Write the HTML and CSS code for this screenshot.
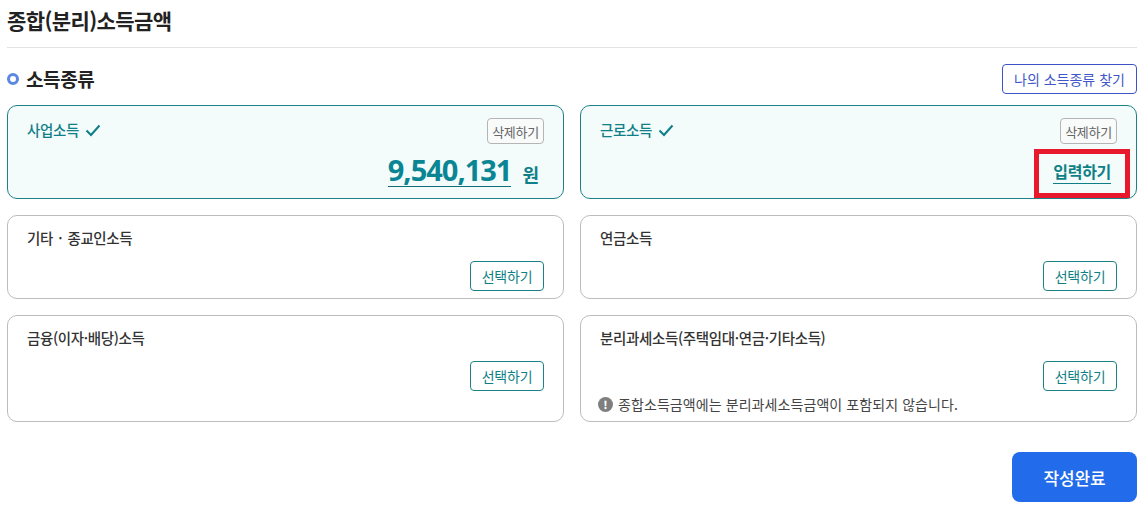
FILE: index.html
```html
<!DOCTYPE html>
<html lang="ko">
<head>
<meta charset="utf-8">
<title>종합(분리)소득금액</title>
<link rel="stylesheet" href="styles.css">
</head>
<body>
<main class="page">
  <h1 class="page-title">종합(분리)소득금액</h1>
  <div class="section-head">
    <h2 class="section-title"><span class="bullet"></span>소득종류</h2>
    <button class="find-btn">나의 소득종류 찾기</button>
  </div>
  <div class="grid">
    <section class="card card-active card-r1">
      <div class="card-top">
        <h3 class="card-title title-active">사업소득
          <svg class="check" viewBox="0 0 16 14" width="16" height="14"><path d="M1.5 7.5 L6 12 L14.5 2.5" fill="none" stroke="#0b7f86" stroke-width="2"/></svg>
        </h3>
        <button class="del-btn">삭제하기</button>
      </div>
      <div class="card-bottom amount-row">
        <a class="amount">9,540,131</a><span class="unit">원</span>
      </div>
    </section>
    <section class="card card-active card-r1">
      <div class="card-top">
        <h3 class="card-title title-active">근로소득
          <svg class="check" viewBox="0 0 16 14" width="16" height="14"><path d="M1.5 7.5 L6 12 L14.5 2.5" fill="none" stroke="#0b7f86" stroke-width="2"/></svg>
        </h3>
        <button class="del-btn">삭제하기</button>
      </div>
      <div class="card-bottom input-row">
        <a class="input-link">입력하기</a>
      </div>
      <div class="highlight"></div>
    </section>
    <section class="card card-r2">
      <h3 class="card-title">기타 · 종교인소득</h3>
      <div class="select-row"><button class="sel-btn">선택하기</button></div>
    </section>
    <section class="card card-r2">
      <h3 class="card-title">연금소득</h3>
      <div class="select-row"><button class="sel-btn">선택하기</button></div>
    </section>
    <section class="card card-r3">
      <h3 class="card-title">금융(이자·배당)소득</h3>
      <div class="select-row"><button class="sel-btn">선택하기</button></div>
    </section>
    <section class="card card-r3">
      <h3 class="card-title">분리과세소득(주택임대·연금·기타소득)</h3>
      <div class="select-row"><button class="sel-btn">선택하기</button></div>
      <p class="note"><span class="note-icon">!</span>종합소득금액에는 분리과세소득금액이 포함되지 않습니다.</p>
    </section>
  </div>
  <div class="actions"><button class="done-btn">작성완료</button></div>
</main>
</body>
</html>
```
FILE: styles.css
```css
* { box-sizing: border-box; }
html, body { margin: 0; padding: 0; background: #fff; }
body {
  font-family: "Noto Sans CJK KR", "Noto Sans", sans-serif;
  color: #222;
  overflow: hidden;
}
button { font-family: inherit; cursor: pointer; padding: 0; background: #fff; }
h1, h2, h3, p { margin: 0; }

.page { width: 1148px; height: 523px; padding: 0 11px 0 7px; }

.page-title {
  height: 48px;
  padding-top: 4px;
  border-bottom: 1px solid #e3e3e3;
  font-size: 21px;
  line-height: 32px;
  font-weight: 700;
  letter-spacing: -0.6px;
  color: #222;
}

.section-head {
  display: flex;
  justify-content: space-between;
  align-items: center;
  height: 30px;
  margin-top: 16px;
  margin-bottom: 11px;
}
.section-title {
  display: flex;
  align-items: center;
  font-size: 19px;
  line-height: 30px;
  font-weight: 700;
  letter-spacing: -0.4px;
}
.bullet {
  width: 12px;
  height: 12px;
  margin-right: 7px;
  border: 3.5px solid #5b88e0;
  border-radius: 50%;
  background: #fff;
}
.find-btn {
  width: 135px;
  height: 30px;
  border: 1px solid #3f53c9;
  border-radius: 4px;
  color: #4256c9;
  font-size: 14px;
  letter-spacing: 0;
}

.grid {
  display: grid;
  grid-template-columns: 557px 557px;
  grid-template-rows: 94px 84px 107px;
  column-gap: 16px;
  row-gap: 16px;
}

.card {
  position: relative;
  border: 1px solid #bcbcbc;
  border-radius: 10px;
  padding: 11px 19px 0;
  display: flex;
  flex-direction: column;
}
.card-active { border-color: #1c8288; background: #f3fbfb; padding-top: 12px; }

.card-top { display: flex; justify-content: space-between; align-items: flex-start; }

.card-title {
  font-size: 14.5px;
  line-height: 22px;
  font-weight: 500;
  letter-spacing: -0.35px;
  word-spacing: 1.5px;
  color: #333;
}
.title-active { color: #0f8088; display: flex; align-items: center; gap: 6px; margin-top: 1px; }
.check { display: block; }

.del-btn {
  width: 57px;
  height: 26px;
  border: 1px solid #b5b5b5;
  border-radius: 4px;
  color: #666;
  background: #f9fbfb;
  font-size: 13px;
  letter-spacing: -0.3px;
}

.card-bottom { display: flex; justify-content: flex-end; align-items: flex-end; }

.amount-row { margin-top: 9px; height: 34px; }
.amount {
  font-size: 29px;
  line-height: 33px;
  font-weight: 700;
  color: #0a8594;
  border-bottom: 1.5px solid #0f6f78;
  font-family: "Noto Sans", sans-serif;
  letter-spacing: -1px;
}
.unit {
  font-size: 18px;
  line-height: 26px;
  font-weight: 700;
  color: #0f8088;
  margin-left: 11px;
  margin-right: 5px;
}

.input-row { margin-top: 16px; padding-right: 6px; }
.input-link {
  font-size: 16px;
  line-height: 23px;
  font-weight: 700;
  letter-spacing: -0.3px;
  color: #0f7f86;
  border-bottom: 1.5px solid #0f7f86;
}

.highlight {
  position: absolute;
  left: 453px;
  top: 43px;
  width: 96px;
  height: 49px;
  border: 5px solid #e8192c;
}

.select-row { display: flex; justify-content: flex-end; margin-top: 12px; }
.sel-btn {
  width: 74px;
  height: 30px;
  border: 1px solid #1c8288;
  border-radius: 4px;
  color: #0f7f86;
  font-size: 14px;
  letter-spacing: -0.2px;
}

.note {
  display: flex;
  align-items: center;
  margin-top: 1px;
  margin-left: -2px;
  font-size: 14px;
  line-height: 24px;
  letter-spacing: 0.08px;
  color: #444;
}
.note-icon {
  width: 15px;
  height: 15px;
  margin-right: 5px;
  border-radius: 50%;
  background: #7f7f7f;
  color: #fff;
  font-size: 11px;
  line-height: 15px;
  font-weight: 900;
  text-align: center;
}

.actions { display: flex; justify-content: flex-end; margin-top: 30px; }
.done-btn {
  width: 125px;
  height: 50px;
  border: 0;
  border-radius: 8px;
  background: #226bea;
  color: #fff;
  font-size: 17px;
  font-weight: 500;
  letter-spacing: -0.2px;
}
```
